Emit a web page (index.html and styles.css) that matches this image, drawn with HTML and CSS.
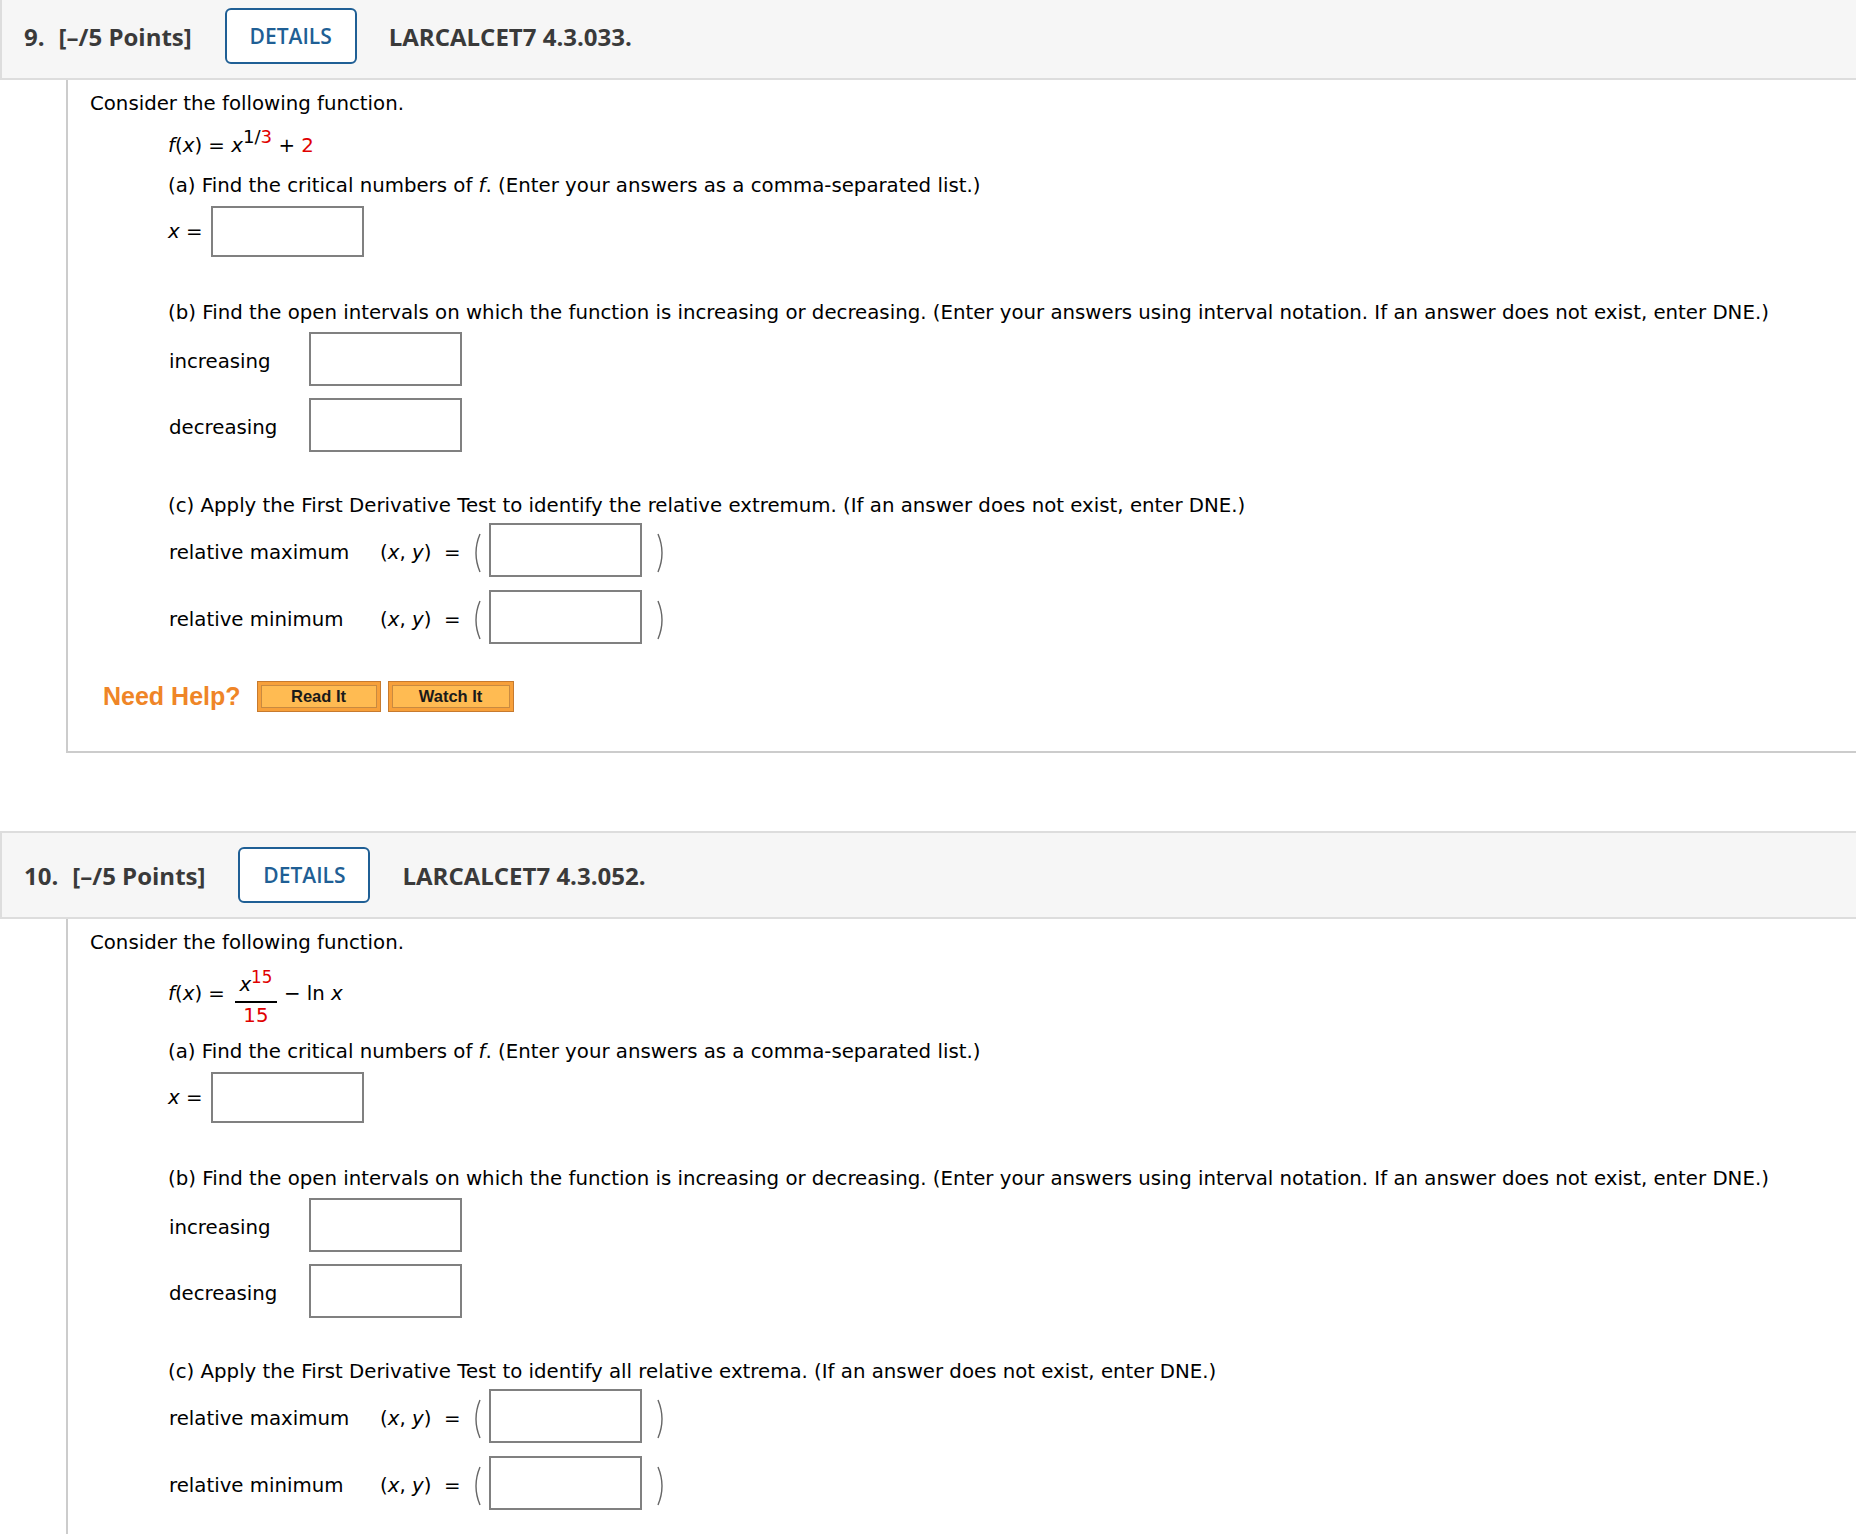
FILE: index.html
```html
<!DOCTYPE html>
<html>
<head>
<meta charset="utf-8">
<link rel="stylesheet" href="styles.css">
</head>
<body>
<div class="page">

  <section class="question">
    <div class="q-head">
      <span class="q-num">9.</span>
      <span class="q-points">[–/5 Points]</span>
      <span class="details">DETAILS</span>
      <span class="q-code">LARCALCET7 4.3.033.</span>
    </div>
    <div class="q-body">
      <p class="consider">Consider the following function.</p>
      <div class="indent">
        <p class="formula"><i>f</i>(<i>x</i>) = <i>x</i><sup>1/<span class="red">3</span></sup> + <span class="red">2</span></p>
        <p class="part part-a">(a) Find the critical numbers of <i>f</i>. (Enter your answers as a comma-separated list.)</p>
        <div class="row row-x"><span class="xlabel"><i>x</i> =</span><span class="box"></span></div>
        <p class="part part-b">(b) Find the open intervals on which the function is increasing or decreasing. (Enter your answers using interval notation. If an answer does not exist, enter DNE.)</p>
        <div class="row row-inc"><span class="lbl">increasing</span><span class="box tall"></span></div>
        <div class="row row-dec"><span class="lbl">decreasing</span><span class="box tall"></span></div>
        <p class="part part-c">(c) Apply the First Derivative Test to identify the relative extremum. (If an answer does not exist, enter DNE.)</p>
        <div class="row row-max"><span class="lbl2">relative maximum</span><span class="xy">(<i>x</i>, <i>y</i>) &nbsp;=</span><svg class="paren" width="12" height="40" viewBox="0 0 12 40"><path d="M9 1 Q1 20 9 39" fill="none" stroke="#666" stroke-width="1.4"/></svg><span class="box tall"></span><svg class="paren pr" width="12" height="40" viewBox="0 0 12 40"><path d="M3 1 Q11 20 3 39" fill="none" stroke="#666" stroke-width="1.4"/></svg></div>
        <div class="row row-min"><span class="lbl2">relative minimum</span><span class="xy">(<i>x</i>, <i>y</i>) &nbsp;=</span><svg class="paren" width="12" height="40" viewBox="0 0 12 40"><path d="M9 1 Q1 20 9 39" fill="none" stroke="#666" stroke-width="1.4"/></svg><span class="box tall"></span><svg class="paren pr" width="12" height="40" viewBox="0 0 12 40"><path d="M3 1 Q11 20 3 39" fill="none" stroke="#666" stroke-width="1.4"/></svg></div>
      </div>
      <div class="help">
        <span class="need">Need Help?</span>
        <span class="hbtn read"><span class="hin">Read It</span></span>
        <span class="hbtn watch"><span class="hin">Watch It</span></span>
      </div>
    </div>
  </section>

  <section class="question q2">
    <div class="q-head">
      <span class="q-num">10.</span>
      <span class="q-points">[–/5 Points]</span>
      <span class="details">DETAILS</span>
      <span class="q-code">LARCALCET7 4.3.052.</span>
    </div>
    <div class="q-body last">
      <p class="consider">Consider the following function.</p>
      <div class="indent">
        <div class="formula2">
          <span class="ftext"><i>f</i>(<i>x</i>) =</span>
          <span class="frac"><span class="num"><i>x</i><sup class="red">15</sup></span><span class="den red">15</span></span>
          <span class="ftext">− ln <i>x</i></span>
        </div>
        <p class="part part-a2">(a) Find the critical numbers of <i>f</i>. (Enter your answers as a comma-separated list.)</p>
        <div class="row row-x"><span class="xlabel"><i>x</i> =</span><span class="box"></span></div>
        <p class="part part-b">(b) Find the open intervals on which the function is increasing or decreasing. (Enter your answers using interval notation. If an answer does not exist, enter DNE.)</p>
        <div class="row row-inc"><span class="lbl">increasing</span><span class="box tall"></span></div>
        <div class="row row-dec"><span class="lbl">decreasing</span><span class="box tall"></span></div>
        <p class="part part-c">(c) Apply the First Derivative Test to identify all relative extrema. (If an answer does not exist, enter DNE.)</p>
        <div class="row row-max"><span class="lbl2">relative maximum</span><span class="xy">(<i>x</i>, <i>y</i>) &nbsp;=</span><svg class="paren" width="12" height="40" viewBox="0 0 12 40"><path d="M9 1 Q1 20 9 39" fill="none" stroke="#666" stroke-width="1.4"/></svg><span class="box tall"></span><svg class="paren pr" width="12" height="40" viewBox="0 0 12 40"><path d="M3 1 Q11 20 3 39" fill="none" stroke="#666" stroke-width="1.4"/></svg></div>
        <div class="row row-min"><span class="lbl2">relative minimum</span><span class="xy">(<i>x</i>, <i>y</i>) &nbsp;=</span><svg class="paren" width="12" height="40" viewBox="0 0 12 40"><path d="M9 1 Q1 20 9 39" fill="none" stroke="#666" stroke-width="1.4"/></svg><span class="box tall"></span><svg class="paren pr" width="12" height="40" viewBox="0 0 12 40"><path d="M3 1 Q11 20 3 39" fill="none" stroke="#666" stroke-width="1.4"/></svg></div>
      </div>
    </div>
  </section>

</div>
</body>
</html>
```
FILE: styles.css
```css
html, body {
  margin: 0;
  padding: 0;
  background: #fff;
}
body {
  font-family: "DejaVu Sans", Verdana, sans-serif;
  font-size: 19.75px;
  color: #000;
  overflow: hidden;
}
.page {
  margin-top: -8px;
}
p { margin: 0; }

.q-head {
  display: flex;
  align-items: center;
  box-sizing: border-box;
  height: 88px;
  background: #f6f6f6;
  border: 2px solid #dddddd;
  border-right: none;
  padding-left: 22px;
  font-family: "Open Sans", sans-serif;
  font-weight: 700;
  font-size: 24px;
  color: #3a3a3a;
}
.q-num { margin-right: 14px; }
.details {
  display: flex;
  align-items: center;
  justify-content: center;
  box-sizing: border-box;
  width: 132px;
  height: 56px;
  margin: 0 32px 0 33px;
  background: #fff;
  border: 2px solid #1f5f95;
  border-radius: 6px;
  color: #1f5f95;
  font-size: 21px;
  font-weight: 600;
}

.q-body {
  margin-left: 66px;
  border-left: 2px solid #cccccc;
  border-bottom: 2px solid #cccccc;
  padding: 12px 0 39px 22px;
}
.q-body.last {
  border-bottom: none;
  padding-bottom: 60px;
}
.q2 { margin-top: 78px; }

.consider { line-height: 24px; }
.indent { padding-left: 78px; }
.formula { line-height: 24px; margin-top: 18px; }
.formula sup { font-size: 0.92em; vertical-align: 0; position: relative; top: -0.5em; line-height: 0; }
.red { color: #e00000; }
.part { line-height: 24px; }
.part-a { margin-top: 16px; }
.part-b { margin-top: 44px; }
.part-c { margin-top: 42px; }

.row {
  display: flex;
  align-items: center;
}
.box {
  display: block;
  box-sizing: border-box;
  width: 153px;
  height: 51px;
  border: 2px solid #808080;
  background: #fff;
}
.box.tall { height: 54px; }
.row-x { margin-top: 8px; }
.xlabel { width: 43px; }
.row-inc { margin-top: 7px; }
.row-dec { margin-top: 12px; }
.lbl { width: 140px; padding-left: 1px; margin-top: 5px; }
.row-max { margin-top: 5px; }
.row-min { margin-top: 13px; }
.lbl2 { width: 211px; padding-left: 1px; margin-top: 5px; }
.xy { width: 91px; margin-top: 5px; }
.paren { display: block; margin-right: 6px; margin-top: 6px; }
.paren.pr { margin-left: 13px; margin-right: 0; }

.help {
  display: flex;
  align-items: center;
  margin-top: 37px;
  padding-left: 13px;
}
.need {
  font-family: "Liberation Sans", Arial, sans-serif;
  font-weight: 700;
  font-size: 25px;
  color: #ef8527;
  margin-right: 16px;
}
.hbtn {
  display: flex;
  box-sizing: border-box;
  height: 31px;
  padding: 3px;
  background: #f7a03a;
  border: 1px solid #c77a2e;
  margin-right: 7px;
}
.hbtn.read { width: 124px; }
.hbtn.watch { width: 126px; }
.hin {
  flex: 1;
  display: flex;
  align-items: center;
  justify-content: center;
  background: #ffbb52;
  border: 1px solid #c98a40;
  font-family: "Liberation Sans", Arial, sans-serif;
  font-weight: 700;
  font-size: 16.5px;
  color: #1a1a1a;
}

.formula2 {
  display: flex;
  align-items: flex-start;
  margin-top: 18px;
}
.ftext { line-height: 24px; margin-top: 9px; }
.frac {
  display: flex;
  flex-direction: column;
  align-items: center;
  margin: 0 7px 0 10px;
}
.num {
  display: block;
  padding: 0 4px 4px 4px;
  line-height: 24px;
  border-bottom: 2px solid #000;
  min-width: 34px;
  text-align: center;
}
.num sup { font-size: 0.85em; vertical-align: 0; position: relative; top: -0.5em; line-height: 0; }
.den { display: block; line-height: 24px; margin-top: 1px; }
.part-a2 { margin-top: 12px; }
```
